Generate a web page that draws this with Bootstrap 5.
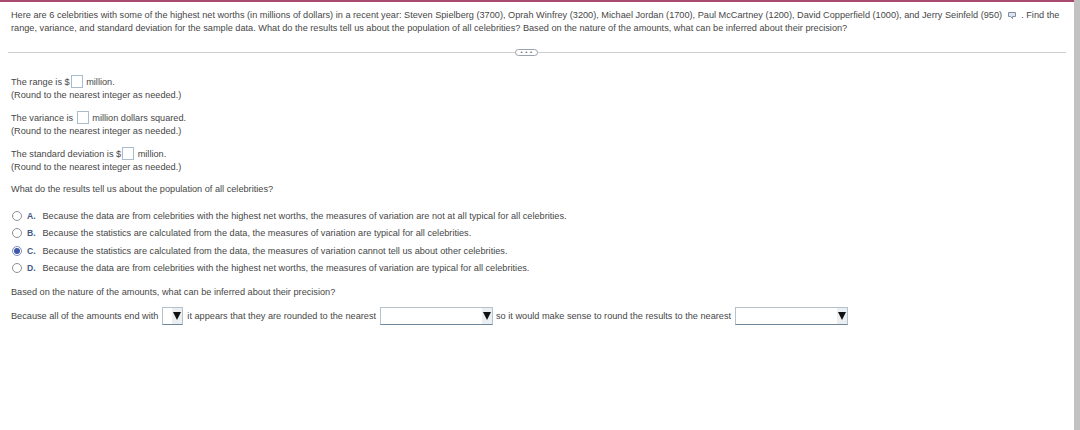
<!DOCTYPE html>
<html lang="en">
<head>
<meta charset="utf-8">
<title>Celebrity net worths</title>
<link href="https://cdn.jsdelivr.net/npm/bootstrap@5.3.0/dist/css/bootstrap.min.css" rel="stylesheet">
<style>
html, body { height: 100%; overflow: hidden; }
body { font-family: "Liberation Sans", Arial, sans-serif; font-size: 9.18px; line-height: 12.5px; color: #474747; background: #fff; }
.shell { height: 430px; border-right: 6px solid #c2c2c2; }
.topline { height: 2px; background: #a8496f; }
.stem { padding: 7px 8px 0 11px; height: 50px; margin: 0; white-space: nowrap; }
.divider { height: 1px; background: #cfcfcf; margin: 0 8px 0 8px; position: relative; }
.pill { position: absolute; left: 507px; top: -3px; width: 23px; height: 7px; border: 1px solid #9aa3ad; border-radius: 4px; background: #fff; color: #667; font-size: 6px; line-height: 4px; text-align: center; letter-spacing: .5px; }
.answers { padding: 22px 0 0 11px; }
.qblock { margin: 0 0 10px; }
.box { display: inline-block; width: 12px; height: 13px; border: 1px solid #a9bccb; background: #fff; vertical-align: -3px; margin: 0 1px 0 1px; }
.ask { margin: 0 0 14px; }
.opts { margin: 0 0 11px; display: flex; flex-direction: column; gap: 5.05px; }
.opt { display: flex; align-items: center; height: 12.5px; }
.dot { width: 10px; height: 10px; border-radius: 50%; border: 1px solid #8b9097; background: #fff; margin: 0 5px 0 1px; flex: none; display: flex; align-items: center; justify-content: center; }
.dot-on { border-color: #7c8fc0; }
.dot-on::after { content: ""; width: 6px; height: 6px; border-radius: 50%; background: #3f55a5; }
.letter { width: 15.5px; flex: none; color: #3f5a85; font-weight: 700; font-size: 8.6px; }
.infer { margin: 0 0 9px; }
.fill { display: flex; align-items: center; height: 18px; white-space: nowrap; }
.drop { height: 18px; border: 1px solid #b4c2cd; border-bottom-color: #6f8598; display: inline-flex; justify-content: flex-end; align-items: center; background: #fff; flex: none; }
.drop-s { width: 21px; margin: 0 4px 0 4px; }
.drop-l { width: 113px; margin: 0 4px 0 4px; }
.drop-m { margin-right: 3px; }
.caret { width: 10px; height: 16px; background: #eceff2; position: relative; }
.caret::after { content: ""; position: absolute; left: 1px; top: 4px; border-left: 4px solid transparent; border-right: 4px solid transparent; border-top: 8px solid #111; }
.note { display: inline-block; vertical-align: -1px; margin: 0 3px; }
</style>
</head>
<body>
<div class="shell">
  <div class="topline"></div>
  <p class="stem">Here are 6 celebrities with some of the highest net worths (in millions of dollars) in a recent year: Steven Spielberg (3700), Oprah Winfrey (3200), Michael Jordan (1700), Paul McCartney (1200), David Copperfield (1000), and Jerry Seinfeld (950) <svg class="note" width="8" height="7" viewBox="0 0 8 7"><path d="M.5.5h7v4h-3v2l-2-2h-2z" fill="#dfe5ee" stroke="#7f8fa8"/></svg> . Find the<br>range, variance, and standard deviation for the sample data. What do the results tell us about the population of all celebrities? Based on the nature of the amounts, what can be inferred about their precision?</p>
  <div class="divider"><div class="pill">• • •</div></div>
  <div class="answers">
    <div class="qblock">The range is $<span class="box"></span> million.<br>(Round to the nearest integer as needed.)</div>
    <div class="qblock">The variance is <span class="box"></span> million dollars squared.<br>(Round to the nearest integer as needed.)</div>
    <div class="qblock">The standard deviation is $<span class="box"></span> million.<br>(Round to the nearest integer as needed.)</div>
    <p class="ask">What do the results tell us about the population of all celebrities?</p>
    <div class="opts">
      <div class="opt"><span class="dot"></span><span class="letter">A.</span><span>Because the data are from celebrities with the highest net worths, the measures of variation are not at all typical for all celebrities.</span></div>
      <div class="opt"><span class="dot"></span><span class="letter">B.</span><span>Because the statistics are calculated from the data, the measures of variation are typical for all celebrities.</span></div>
      <div class="opt"><span class="dot dot-on"></span><span class="letter">C.</span><span>Because the statistics are calculated from the data, the measures of variation cannot tell us about other celebrities.</span></div>
      <div class="opt"><span class="dot"></span><span class="letter">D.</span><span>Because the data are from celebrities with the highest net worths, the measures of variation are typical for all celebrities.</span></div>
    </div>
    <p class="infer">Based on the nature of the amounts, what can be inferred about their precision?</p>
    <div class="fill">Because all of the amounts end with<span class="drop drop-s"><span class="caret"></span></span>it appears that they are rounded to the nearest<span class="drop drop-l drop-m"><span class="caret"></span></span>so it would make sense to round the results to the nearest<span class="drop drop-l"><span class="caret"></span></span></div>
  </div>
</div>
<script src="https://cdn.jsdelivr.net/npm/bootstrap@5.3.0/dist/js/bootstrap.bundle.min.js"></script>
</body>
</html>
